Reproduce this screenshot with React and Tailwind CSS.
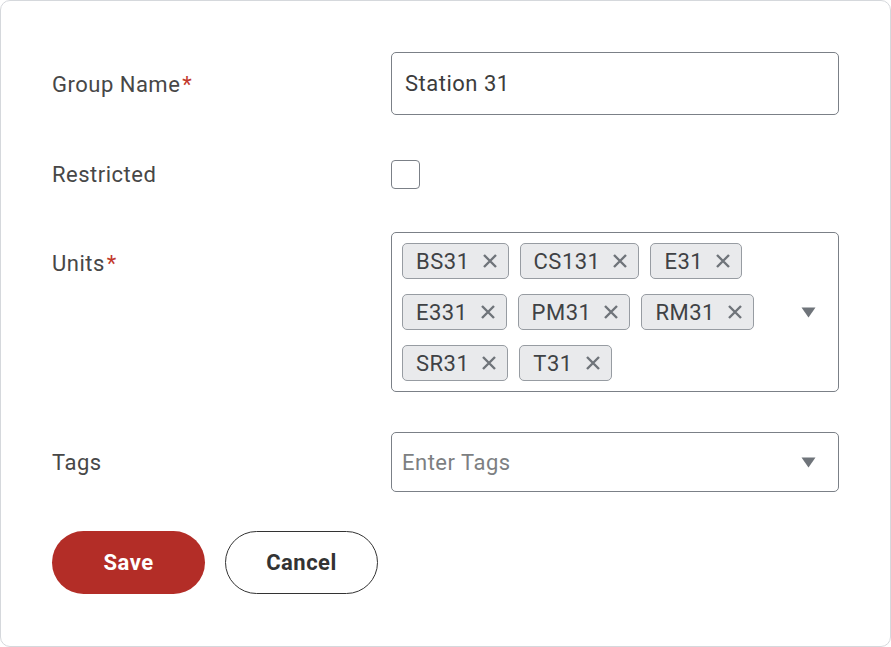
import React from 'react';

const units = [['BS31', 'CS131', 'E31'], ['E331', 'PM31', 'RM31'], ['SR31', 'T31']];

const CloseIcon = () => (
  <svg width="16" height="16" viewBox="0 0 16 16" className="shrink-0">
    <path d="M2 2 L14 14 M14 2 L2 14" stroke="#6f747a" strokeWidth="2.4" strokeLinecap="butt" />
  </svg>
);

const Caret = () => (
  <svg width="15" height="11" viewBox="0 0 15 11" className="shrink-0">
    <path d="M0.5 0.5 H14.5 L7.5 10.5 Z" fill="#6f747a" />
  </svg>
);

const Chip = ({ label }) => (
  <div className="h-[36px] flex items-center gap-[12px] pl-[13px] pr-[10px] bg-[#e9eaec] border border-[#979ca2] rounded-[5px] text-[22px] text-[#3f4245]">
    <span>{label}</span>
    <CloseIcon />
  </div>
);

const Required = () => <span className="text-[#c2392c] ml-[2px]">*</span>;

export default function App() {
  return (
    <div className="w-full h-[647px] bg-white border border-[#d5d8dc] rounded-[10px] pt-[51px] px-[51px] font-['Roboto',sans-serif] text-[22px] tracking-[0.5px] text-[#474747]">
      <div className="flex items-center h-[63px]">
        <div className="w-[339px] pt-[2px]">Group Name<Required /></div>
        <div className="flex-1 h-full flex items-center border border-[#7b8087] rounded-[5px] pl-[13px] text-[#3c3c3c]">Station 31</div>
      </div>

      <div className="flex items-center h-[28px] mt-[45px]">
        <div className="w-[339px]">Restricted</div>
        <div className="w-[29px] h-[29px] border border-[#7b8087] rounded-[4px]" />
      </div>

      <div className="flex items-start mt-[44px]">
        <div className="w-[339px] pt-[15px]">Units<Required /></div>
        <div className="flex-1 h-[160px] flex items-center border border-[#7b8087] rounded-[5px] p-[10px] pr-[22px]">
          <div className="flex-1 flex flex-col gap-[15px]">
            {units.map((row, i) => (
              <div key={i} className="flex gap-[11px]">
                {row.map(u => <Chip key={u} label={u} />)}
              </div>
            ))}
          </div>
          <Caret />
        </div>
      </div>

      <div className="flex items-center h-[60px] mt-[40px]">
        <div className="w-[339px]">Tags</div>
        <div className="flex-1 h-full flex items-center justify-between border border-[#7b8087] rounded-[5px] pl-[10px] pr-[22px] text-[#7d7f82]">
          <span>Enter Tags</span>
          <Caret />
        </div>
      </div>

      <div className="flex gap-[20px] mt-[39px]">
        <button className="w-[153px] h-[63px] rounded-full bg-[#b32d27] text-white font-bold text-[22px]">Save</button>
        <button className="w-[153px] h-[63px] rounded-full bg-white border border-[#333] text-[#333] font-bold text-[22px]">Cancel</button>
      </div>
    </div>
  );
}
